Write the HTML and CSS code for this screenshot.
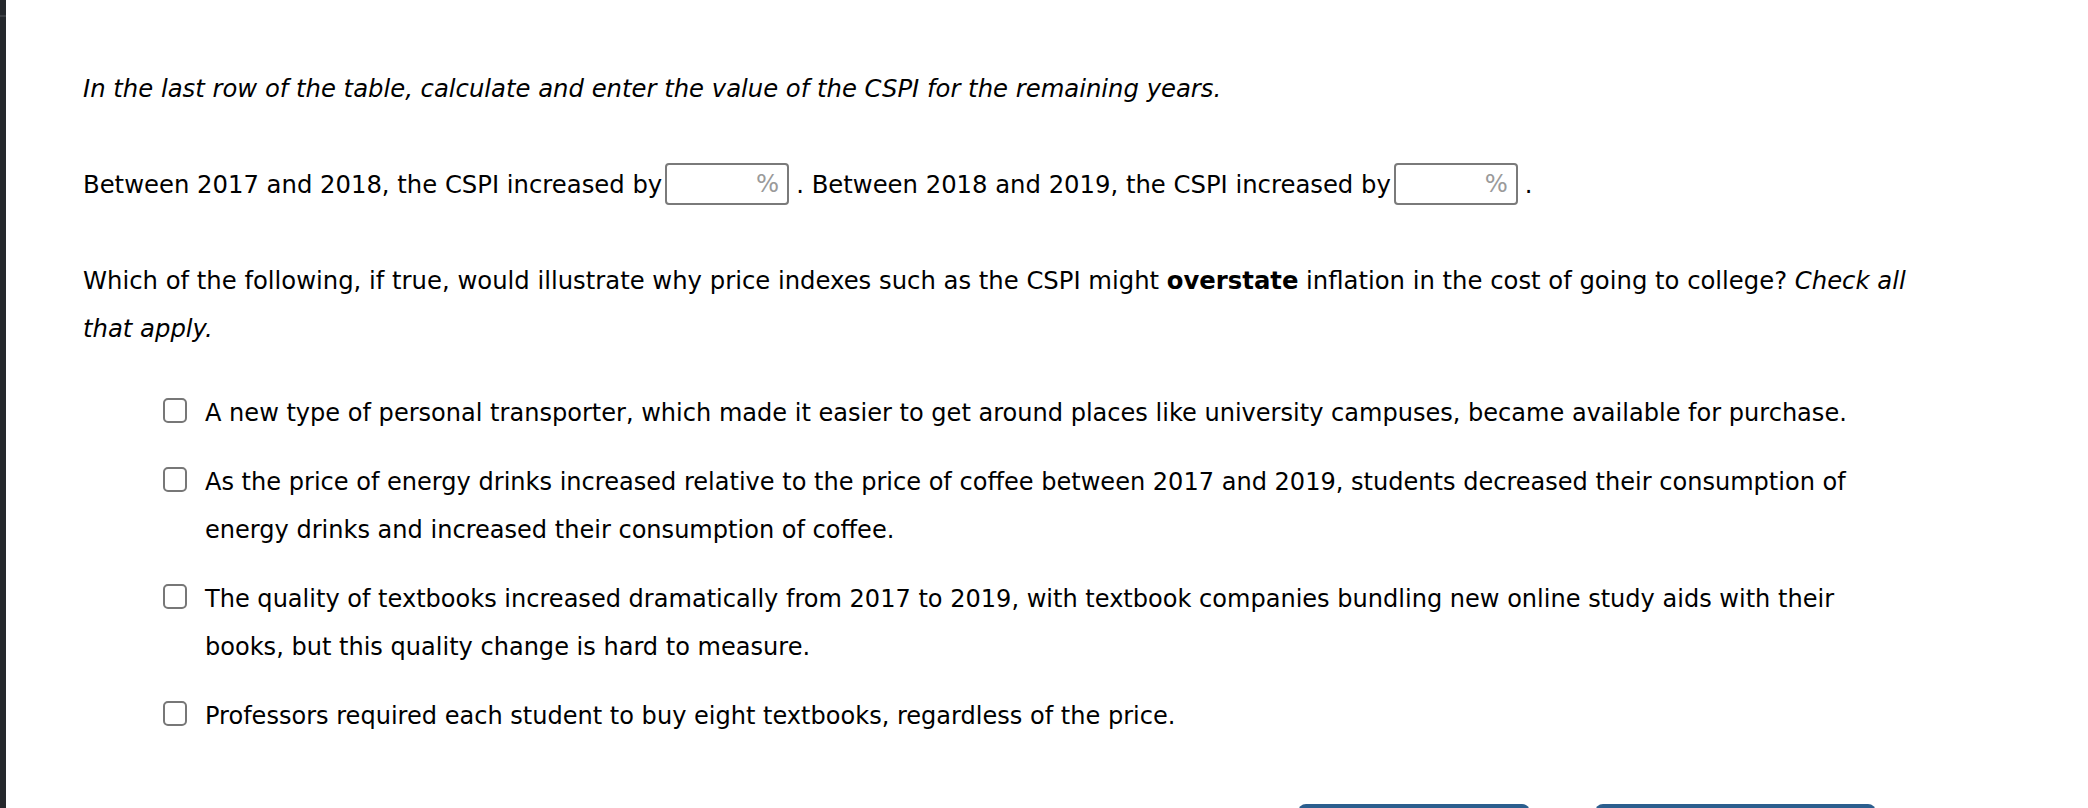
FILE: index.html
```html
<!DOCTYPE html>
<html lang="en">
<head>
<meta charset="utf-8">
<title>CSPI question</title>
<link rel="stylesheet" href="styles.css">
</head>
<body>
<div class="page">
  <aside class="edge"><div class="edge-line"></div></aside>
  <main class="content">
    <p class="instr"><em>In the last row of the table, calculate and enter the value of the CSPI for the remaining years.</em></p>
    <p class="fill">Between 2017 and 2018, the CSPI increased by<span class="box"><span class="pct">%</span></span>. Between 2018 and 2019, the CSPI increased by<span class="box"><span class="pct">%</span></span>.</p>
    <p class="question">Which of the following, if true, would illustrate why price indexes such as the CSPI might <strong>overstate</strong> inflation in the cost of going to college? <em>Check all that apply.</em></p>
    <ul class="options">
      <li class="option"><span class="check"></span><span class="label">A new type of personal transporter, which made it easier to get around places like university campuses, became available for purchase.</span></li>
      <li class="option"><span class="check"></span><span class="label">As the price of energy drinks increased relative to the price of coffee between 2017 and 2019, students decreased their consumption of energy drinks and increased their consumption of coffee.</span></li>
      <li class="option"><span class="check"></span><span class="label">The quality of textbooks increased dramatically from 2017 to 2019, with textbook companies bundling new online study aids with their books, but this quality change is hard to measure.</span></li>
      <li class="option"><span class="check"></span><span class="label">Professors required each student to buy eight textbooks, regardless of the price.</span></li>
    </ul>
    <div class="actions">
      <button class="btn btn-a">Grade It Now</button>
      <button class="btn btn-b">Save &amp; Continue</button>
    </div>
  </main>
</div>
</body>
</html>
```

FILE: styles.css
```css
html, body {
  margin: 0;
  padding: 0;
  background: #ffffff;
  overflow: hidden;
}
body {
  font-family: "DejaVu Sans", Verdana, sans-serif;
  font-size: 24.3px;
  line-height: 48px;
  color: #000;
}
.page {
  display: flex;
  min-height: 808px;
}
.edge {
  width: 6px;
  flex: 0 0 6px;
  background: #25282c;
}
.edge-line {
  margin-top: 15px;
  height: 2px;
  background: #3c3f43;
}
.content {
  flex: 0 0 auto;
  width: 1840px;
  padding: 65px 0 0 77px;
}
p { margin: 0; }
.instr { margin-bottom: 48px; }
.fill { margin-bottom: 48px; white-space: nowrap; }
.box {
  display: inline-flex;
  justify-content: flex-end;
  align-items: center;
  box-sizing: border-box;
  width: 124px;
  height: 42px;
  border: 2px solid #7a7a7a;
  border-radius: 4px;
  vertical-align: middle;
  margin: -4px 7px 0 3px;
  padding-right: 8px;
  line-height: 1;
}
.pct { color: #9a9a9a; }
.question { margin-bottom: 36px; }
.options {
  list-style: none;
  margin: 0;
  padding: 0 30px 0 80px;
  font-size: 24.05px;
}
.option {
  display: flex;
  align-items: flex-start;
  margin-bottom: 21px;
}
.check {
  flex: 0 0 auto;
  box-sizing: border-box;
  width: 24px;
  height: 25px;
  border: 2px solid #777;
  border-radius: 5px;
  margin: 9px 18px 0 0;
}
.label { flex: 1; }
.actions {
  display: flex;
  justify-content: flex-end;
  gap: 65px;
  margin-top: 64px;
  padding-right: 47px;
}
.btn {
  height: 52px;
  border: none;
  border-radius: 8px;
  background: #2b5e8e;
  color: #fff;
  font-family: "DejaVu Sans", Verdana, sans-serif;
  font-size: 20px;
}
.btn-a { width: 232px; }
.btn-b { width: 281px; }
```
